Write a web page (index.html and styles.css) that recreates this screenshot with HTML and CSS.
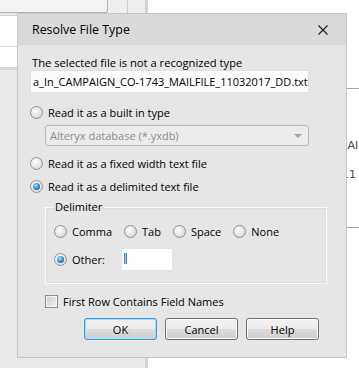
FILE: index.html
```html
<!DOCTYPE html>
<html lang="en">
<head>
    <meta charset="UTF-8">
    <meta name="viewport" content="width=device-width, initial-scale=1.0">
    <title>Resolve File Type</title>
    <link rel="stylesheet" href="styles.css">
</head>
<body>
    <!-- 背后的主窗口 -->
    <div class="screen">
        <div class="side">
            <div class="side-top">
                <div class="field"></div>
                <div class="tab"></div>
            </div>
            <div class="side-list">
                <div class="side-row tall"></div>
                <div class="side-row"></div>
            </div>
        </div>
        <div class="main">
            <div class="grid-line first"></div>
            <div class="cell-text one">MAI</div>
            <div class="cell-text two">11</div>
            <div class="grid-line"></div>
        </div>
    </div>

    <!-- 对话框 -->
    <div class="dialog">
        <div class="titlebar">
            <span class="title">Resolve File Type</span>
            <svg class="close" width="10" height="10" viewBox="0 0 10 10">
                <path d="M0.5 0.5 L9.5 9.5 M9.5 0.5 L0.5 9.5" stroke="#1a1a1a" stroke-width="1.1" fill="none"/>
            </svg>
        </div>
        <div class="body">
            <div class="label">The selected file is not a recognized type</div>
            <div class="filename">a_In_CAMPAIGN_CO-1743_MAILFILE_11032017_DD.txt</div>

            <label class="option first"><span class="radio"></span>Read it as a built in type</label>
            <div class="select">Alteryx database (*.yxdb)<span class="arrow"></span></div>
            <label class="option fixed"><span class="radio"></span>Read it as a fixed width text file</label>
            <label class="option"><span class="radio on"></span>Read it as a delimited text file</label>

            <fieldset class="group">
                <legend>Delimiter</legend>
                <div class="delims">
                    <label class="opt"><span class="radio"></span>Comma</label>
                    <label class="opt"><span class="radio"></span>Tab</label>
                    <label class="opt"><span class="radio"></span>Space</label>
                    <label class="opt"><span class="radio"></span>None</label>
                </div>
                <div class="other">
                    <label class="opt"><span class="radio on"></span>Other:</label>
                    <div class="other-input"><span class="caret"></span></div>
                </div>
            </fieldset>

            <label class="check"><span class="box"></span>First Row Contains Field Names</label>

            <div class="buttons">
                <button class="btn default">OK</button>
                <button class="btn">Cancel</button>
                <button class="btn">Help</button>
            </div>
        </div>
    </div>
</body>
</html>
```

FILE: styles.css
```css
*{
    box-sizing: border-box;
}
html,body{
    margin: 0;
    padding: 0;
}
body{
    width: 359px;
    height: 368px;
    overflow: hidden;
    position: relative;
    background: #fff;
    font-family: "Open Sans", "Noto Sans", sans-serif;
    font-size: 11px;
    color: #000;
}

/* 背后的窗口 */
.screen{
    display: flex;
    height: 368px;
}
.side{
    width: 148px;
    flex: none;
    background: #e9e9e9;
    border-right: 3px solid #d4d4d4;
}
.side-top{
    display: flex;
    height: 13px;
    background: #eeeeee;
}
.field{
    width: 108px;
    background: #f3f3f3;
    border-right: 1px solid #b4b4b4;
    border-bottom: 1px solid #b4b4b4;
    border-bottom-right-radius: 3px;
}
.tab{
    width: 20px;
    border-right: 1px solid #cdcdcd;
}
.side-list{
    margin-top: 2px;
    border-top: 1px solid #d0d0d0;
    border-bottom: 3px solid #d6d6d6;
    background: #fff;
}
.side-row{
    height: 20px;
}
.side-row.tall{
    height: 31px;
    border-bottom: 1px solid #d6d6d6;
}
.main{
    flex: 1;
    overflow: hidden;
}
.grid-line{
    height: 1px;
    background: #a8a8a8;
    margin-top: 45px;
}
.grid-line.first{
    margin-top: 88px;
}
.cell-text{
    font-family: "DejaVu Sans", sans-serif;
    font-size: 11px;
    color: #4a4a4a;
    line-height: 14px;
    white-space: nowrap;
}
.cell-text.one{
    margin-top: 50px;
    padding-left: 190px;
}
.cell-text.two{
    margin-top: 15px;
    padding-left: 194px;
}

/* 对话框 */
.dialog{
    position: absolute;
    left: 17px;
    top: 13px;
    width: 330px;
    height: 345px;
    background: #e6e6e6;
    border: 1px solid #c6c6c6;
    display: flex;
    flex-direction: column;
}
.titlebar{
    height: 31px;
    flex: none;
    background: #dadada;
    display: flex;
    align-items: center;
    justify-content: space-between;
    padding: 0 18px 0 14px;
}
.title{
    font-size: 12.4px;
}
.close{
    display: block;
}
.body{
    padding: 10px 0 0 12px;
}
.label{
    line-height: 15px;
    padding-left: 2px;
    font-size: 11.2px;
}
.filename{
    width: 279px;
    height: 23px;
    line-height: 21px;
    padding-left: 2px;
    background: #fcfcfc;
    border: 1px solid #e0e0e0;
    white-space: nowrap;
    overflow: hidden;
}

/* 单选按钮 */
.option, .opt{
    display: flex;
    align-items: center;
    gap: 5px;
    height: 20px;
}
.option{
    margin-top: 3px;
}
.option.first{
    margin-top: 9px;
}
.option.fixed{
    margin-top: 7px;
}
.radio{
    width: 13px;
    height: 13px;
    flex: none;
    border-radius: 50%;
    border: 1px solid #939393;
    background: radial-gradient(circle at 40% 35%, #fdfdfd 0%, #e4e4e4 55%, #cdcdcd 100%);
    display: flex;
    align-items: center;
    justify-content: center;
}
.radio.on::after{
    content: "";
    width: 7px;
    height: 7px;
    border-radius: 50%;
    background: radial-gradient(circle at 40% 35%, #a8e4ff 0%, #2f8fd4 50%, #0c4c7e 100%);
}

/* 下拉框（禁用） */
.select{
    position: relative;
    width: 264px;
    height: 21px;
    margin: 3px 0 0 15px;
    padding-left: 4px;
    line-height: 19px;
    color: #8c8c8c;
    background: #ececec;
    border: 1px solid #b8b8b8;
    border-radius: 3px;
}
.arrow{
    position: absolute;
    right: 6px;
    top: 8px;
    border-left: 4px solid transparent;
    border-right: 4px solid transparent;
    border-top: 4px solid #a6a6a6;
}

/* 分隔符分组框 */
.group{
    width: 282px;
    margin: 3px 0 0 15px;
    padding: 6px 8px 12px 8px;
    border: 1px solid #fafafa;
    box-shadow: inset 0 0 0 1px #dcdcdc;
}
.group legend{
    padding: 0 2px;
    margin-left: -1px;
    line-height: 16px;
}
.delims{
    display: flex;
    gap: 12px;
}
.other{
    display: flex;
    align-items: center;
    margin-top: 7px;
}
.other .opt{
    width: 67px;
}
.other-input{
    width: 52px;
    height: 23px;
    background: #fff;
    border: 1px solid #e4e4e4;
    padding: 4px 0 0 2px;
}
.caret{
    display: block;
    width: 3px;
    height: 11px;
    border-left: 1px solid #3a86d6;
    border-right: 1px solid #3a86d6;
    background: #9cc3ee;
}

/* 复选框 */
.check{
    display: flex;
    align-items: center;
    gap: 5px;
    height: 20px;
    margin: 7px 0 0 15px;
}
.box{
    width: 13px;
    height: 13px;
    flex: none;
    border: 1px solid #8e8f8f;
    box-shadow: inset 0 0 0 1px #f4f4f4;
    background: linear-gradient(135deg, #c9ccd1 0%, #f3f3f3 100%);
}

/* 底部按钮 */
.buttons{
    display: flex;
    gap: 8px;
    margin: 7px 0 0 54px;
}
.btn{
    width: 73px;
    height: 22px;
    padding: 0;
    font-family: inherit;
    font-size: 11px;
    color: #000;
    border: 1px solid #707070;
    border-radius: 3px;
    background: linear-gradient(#f2f2f2 0%, #ebebeb 50%, #dddddd 50%, #cfcfcf 100%);
    box-shadow: inset 0 0 0 1px #fcfcfc;
}
.btn.default{
    border-color: #3c9ad8;
    box-shadow: inset 0 0 0 1px #9fdcf7;
}
```
